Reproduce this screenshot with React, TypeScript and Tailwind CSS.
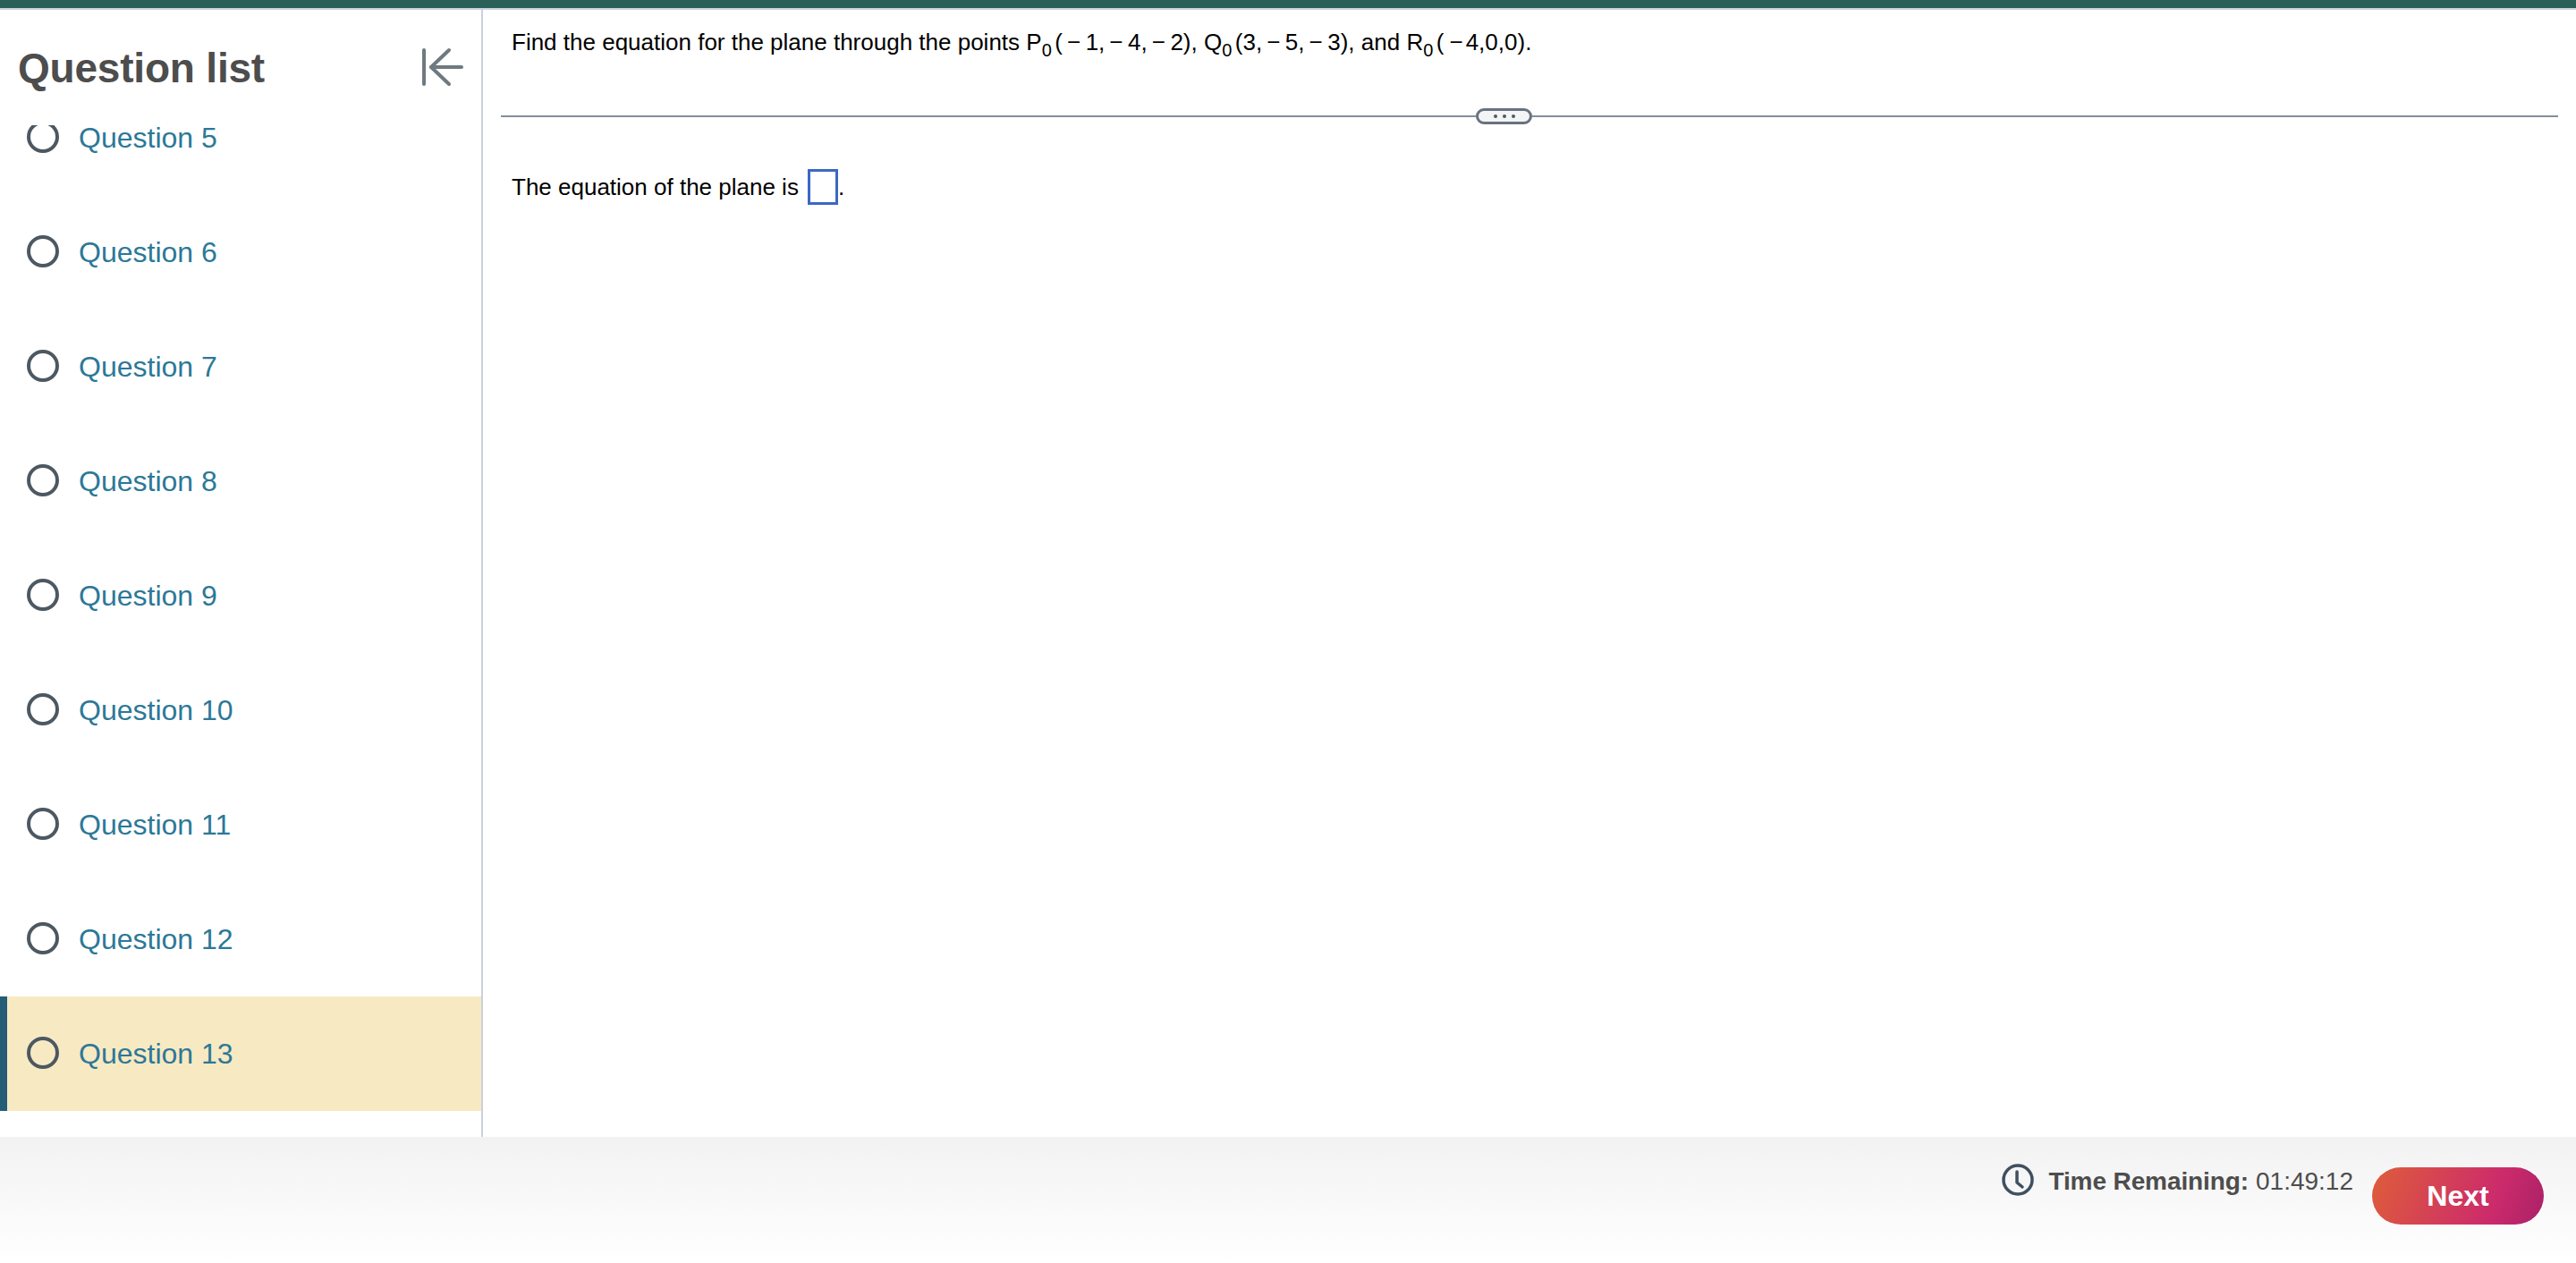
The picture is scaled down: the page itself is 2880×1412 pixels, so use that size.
import React from "react";

const questions = [5, 6, 7, 8, 9, 10, 11, 12, 13];

function Sub() {
  return <span className="relative top-[7px] mr-[3.5px] text-[20px] leading-none">0</span>;
}

function Minus() {
  return <span className="ml-[5px] mr-[5.5px]">−</span>;
}

export default function App() {
  return (
    <div className="flex h-[1412px] w-full flex-col overflow-hidden bg-white font-['Liberation_Sans',Arial,sans-serif]">
      <div className="h-[9px] shrink-0 bg-[#2a6058]" />
      <div className="h-[2px] shrink-0 bg-[#cdd3df]" />
      <div className="flex min-h-0 flex-1">
        <aside className="flex w-[540px] shrink-0 flex-col border-r-2 border-[#cbd0de]">
          <div className="flex h-[129px] shrink-0 items-start justify-between pr-[20px] pl-[20px] pt-[36px]">
            <h1 className="text-[46px] leading-[58px] font-bold tracking-[-0.2px] text-[#4d4d4d]">Question list</h1>
            <svg className="mt-[6px]" width="48" height="44" viewBox="0 0 48 44" fill="none" stroke="#6f7a80" strokeWidth="4" strokeLinecap="round" strokeLinejoin="round">
              <path d="M4 3v38" />
              <path d="M46 22H12" />
              <path d="M32 3 12 22l20 19" />
            </svg>
          </div>
          <div className="flex min-h-0 flex-1 flex-col justify-end overflow-hidden pb-[29px]">
            {questions.map((q) => (
              <div
                key={q}
                className={`flex h-[128px] shrink-0 items-center gap-[22px] border-l-8 pl-[22px] ${
                  q === 13 ? "border-[#235e76] bg-[#f7e9c2]" : "border-transparent"
                }`}
              >
                <span className="mb-[2px] h-[36px] w-[36px] shrink-0 rounded-full border-[4px] border-[#4c5862]" />
                <span className="text-[32px] leading-[40px] text-[#2c7898]">Question {q}</span>
              </div>
            ))}
          </div>
        </aside>
        <main className="min-w-0 flex-1 pl-[20px] pr-[20px]">
          <div className="h-[110px] whitespace-pre pl-[12px] pt-[21px] text-[26px] leading-[30px] text-black">
            <p>
              Find the equation for the plane through the points P<Sub />(<Minus />1,<Minus />4,<Minus />2), Q<Sub />(3,<Minus />5,<Minus />3), and R<Sub />(<span className="ml-[6px] mr-[3px]">−</span>4,0,0).
            </p>
          </div>
          <div className="flex h-[18px] items-center">
            <div className="h-[2px] w-[1090px] bg-[#858d9c]" />
            <div className="flex h-[18px] w-[63px] shrink-0 items-center justify-center gap-[6px] rounded-full border-[3px] border-[#69727f] bg-[#f3f4f6]">
              <span className="h-[4px] w-[4px] rounded-full bg-[#4c5862]" />
              <span className="h-[4px] w-[4px] rounded-full bg-[#4c5862]" />
              <span className="h-[4px] w-[4px] rounded-full bg-[#4c5862]" />
            </div>
            <div className="h-[2px] flex-1 bg-[#858d9c]" />
          </div>
          <div className="mt-[50px] flex items-center pl-[12px] text-[26px] leading-[40px] text-black">
            <span>The equation of the plane is</span>
            <span className="ml-[10px] h-[40px] w-[34px] border-[3px] border-[#3b68c4]" />
            <span>.</span>
          </div>
        </main>
      </div>
      <footer className="flex h-[141px] shrink-0 items-start justify-end bg-gradient-to-b from-[#f2f2f2] to-[#ffffff] pr-[36px] pt-[30px]">
        <div className="flex items-center">
          <svg width="36" height="36" viewBox="0 0 36 36" fill="none" stroke="#404f61" strokeWidth="3.5" strokeLinecap="round" strokeLinejoin="round">
            <circle cx="18" cy="18" r="16" />
            <path d="M17 9v12l6 5" />
          </svg>
          <span className="ml-[16px] mt-[4px] text-[28px] leading-[32px] font-bold tracking-[-0.1px] text-[#4d4d4d]">Time Remaining:</span>
          <span className="ml-[8px] mt-[4px] text-[28px] leading-[32px] text-[#4d4d4d]">01:49:12</span>
        </div>
        <button className="mt-[4px] ml-[21px] h-[64px] w-[192px] rounded-full bg-[linear-gradient(110deg,#de5d3a_0%,#cc2b6b_70%,#a92168_100%)] text-[32px] font-bold text-white shadow-[0_0_0_1px_#ffffff]">
          Next
        </button>
      </footer>
    </div>
  );
}
